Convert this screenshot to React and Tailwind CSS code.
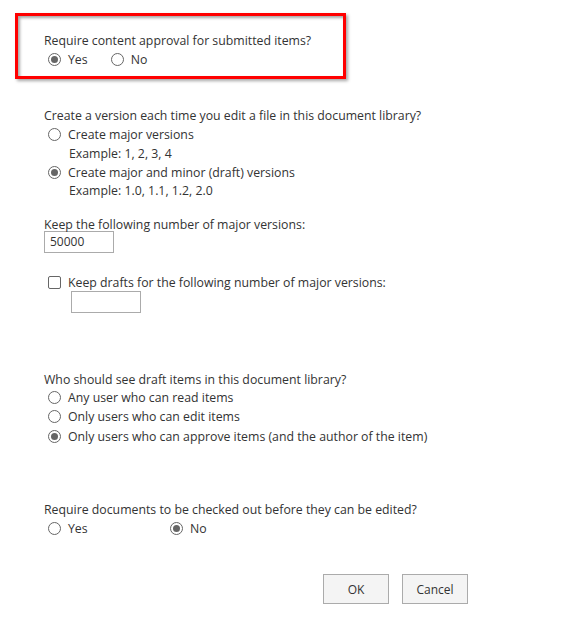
import React from "react";

function Radio({ checked }) {
  return (
    <span className="relative inline-block w-[13px] h-[13px] rounded-full border border-[#666] bg-white shrink-0">
      {checked && (
        <span className="absolute left-[2px] top-[2px] w-[7px] h-[7px] rounded-full bg-[#666]" />
      )}
    </span>
  );
}

function RadioRow({ checked, label, className = "" }) {
  return (
    <div className={"flex items-center h-[19px] " + className}>
      <span className="ml-[4px] mr-[7px] flex items-center">
        <Radio checked={checked} />
      </span>
      <span>{label}</span>
    </div>
  );
}

export default function App() {
  return (
    <div
      className="w-[576px] h-[644px] bg-white text-[#333] text-[12.3px] leading-[19px] relative"
      style={{ fontFamily: '"Open Sans", "Noto Sans", sans-serif' }}
    >
      <div className="pt-[13px] pl-[15px]">
        <div className="w-[331px] h-[66px] border-[3px] border-[#ff0000] pt-[15px] pl-[26px] shadow-[2px_2px_3px_rgba(0,0,0,0.35),inset_2px_2px_3px_rgba(0,0,0,0.35)]">
          <div>Require content approval for submitted items?</div>
          <div className="flex items-center h-[19px]">
            <RadioRow checked label="Yes" />
            <RadioRow label="No" className="ml-[19px]" />
          </div>
        </div>
      </div>

      <div className="pl-[44px]">
        <div className="mt-[27px]">
          Create a version each time you edit a file in this document library?
        </div>
        <RadioRow label="Create major versions" />
        <div className="pl-[25px]">Example: 1, 2, 3, 4</div>
        <RadioRow checked label="Create major and minor (draft) versions" />
        <div className="pl-[25px] -mt-[1px]">Example: 1.0, 1.1, 1.2, 2.0</div>

        <div className="mt-[15px]">Keep the following number of major versions:</div>
        <div className="-mt-[3px] w-[70px] h-[22px] border border-[#ababab] pl-[5px] leading-[20px] text-[12px]">
          50000
        </div>

        <div className="flex items-center h-[19px] mt-[20px]">
          <span className="ml-[4px] mr-[7px] w-[13px] h-[13px] border border-[#666] rounded-[2px] bg-white" />
          <span>Keep drafts for the following number of major versions:</span>
        </div>
        <div className="ml-[27px] -mt-[1px] w-[70px] h-[22px] border border-[#ababab]" />

        <div className="mt-[57px]">Who should see draft items in this document library?</div>
        <RadioRow label="Any user who can read items" className="-mt-[1px]" />
        <RadioRow label="Only users who can edit items" />
        <RadioRow checked label="Only users who can approve items (and the author of the item)" className="mt-[1px]" />

        <div className="mt-[54px]">Require documents to be checked out before they can be edited?</div>
        <div className="flex items-center h-[19px]">
          <div className="w-[122px]">
            <RadioRow label="Yes" />
          </div>
          <RadioRow checked label="No" />
        </div>
      </div>

      <div className="flex pl-[323px] mt-[36px] gap-[13px]">
        <button className="w-[66px] h-[30px] bg-[#f4f4f4] border border-[#ababab] text-[12px] text-[#333]">
          OK
        </button>
        <button className="w-[66px] h-[30px] bg-[#f4f4f4] border border-[#ababab] text-[12px] text-[#333]">
          Cancel
        </button>
      </div>
    </div>
  );
}
